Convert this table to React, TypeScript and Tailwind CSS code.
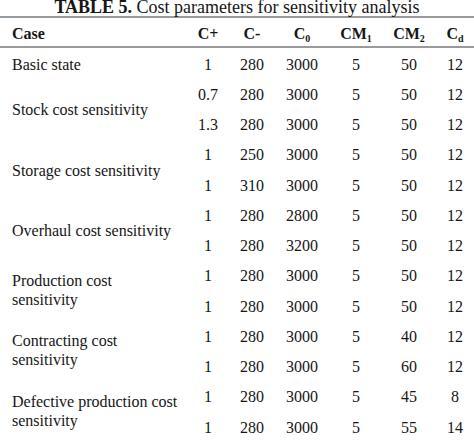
import React from "react";

type Row = { label?: string[]; span?: number; values: string[] };

const rows: Row[] = [
  { label: ["Basic state"], span: 1, values: ["1", "280", "3000", "5", "50", "12"] },
  { label: ["Stock cost sensitivity"], span: 2, values: ["0.7", "280", "3000", "5", "50", "12"] },
  { values: ["1.3", "280", "3000", "5", "50", "12"] },
  { label: ["Storage cost sensitivity"], span: 2, values: ["1", "250", "3000", "5", "50", "12"] },
  { values: ["1", "310", "3000", "5", "50", "12"] },
  { label: ["Overhaul cost sensitivity"], span: 2, values: ["1", "280", "2800", "5", "50", "12"] },
  { values: ["1", "280", "3200", "5", "50", "12"] },
  { label: ["Production cost", "sensitivity"], span: 2, values: ["1", "280", "3000", "5", "50", "12"] },
  { values: ["1", "280", "3000", "5", "50", "12"] },
  { label: ["Contracting cost", "sensitivity"], span: 2, values: ["1", "280", "3000", "5", "40", "12"] },
  { values: ["1", "280", "3000", "5", "60", "12"] },
  { label: ["Defective production cost", "sensitivity"], span: 2, values: ["1", "280", "3000", "5", "45", "8"] },
  { values: ["1", "280", "3000", "5", "55", "14"] },
];

const serif = "font-['Liberation_Serif','Times_New_Roman',serif]";

export default function App(): JSX.Element {
  return (
    <div className={`w-[474px] h-[442px] overflow-hidden bg-white text-[#161616] ${serif}`}>
      <div className={`h-[16px] text-center text-[18px] leading-[14px] whitespace-nowrap ${serif}`}>
        <span className="font-bold">TABLE 5.</span> Cost parameters for sensitivity analysis
      </div>
      <div className="h-[2px] bg-[#9a9a9a]" />
      <div
        className={`grid grid-cols-[186px_44px_44px_56px_52px_54px_38px] h-[28px] pt-[3px] text-[16px] leading-[25px] font-bold ${serif}`}
      >
        <div className="pl-[12px]">Case</div>
        <div className="text-center">C+</div>
        <div className="text-center">C-</div>
        <div className="text-center">
          C<sub className="text-[10px]">0</sub>
        </div>
        <div className="text-center">
          CM<sub className="text-[10px]">1</sub>
        </div>
        <div className="text-center">
          CM<sub className="text-[10px]">2</sub>
        </div>
        <div className="text-center">
          C<sub className="text-[10px]">d</sub>
        </div>
      </div>
      <div className="h-[2px] bg-[#9a9a9a]" />
      <div
        className={`grid grid-cols-[186px_44px_44px_56px_52px_54px_38px] auto-rows-[30.25px] pt-[1.5px] text-[16px] leading-[30px] ${serif}`}
      >
        {rows.map((r, i) => (
          <React.Fragment key={i}>
            {r.label && (
              <div
                className={`pl-[12px] self-center whitespace-nowrap ${
                  r.span === 2 ? "row-span-2" : ""
                } ${r.label.length > 1 ? "leading-[19px] -mt-[4px]" : ""}`}
              >
                {r.label.map((l, j) => (
                  <div key={j}>{l}</div>
                ))}
              </div>
            )}
            {r.values.map((v, j) => (
              <div key={j} className="text-center">
                {v}
              </div>
            ))}
          </React.Fragment>
        ))}
      </div>
    </div>
  );
}
